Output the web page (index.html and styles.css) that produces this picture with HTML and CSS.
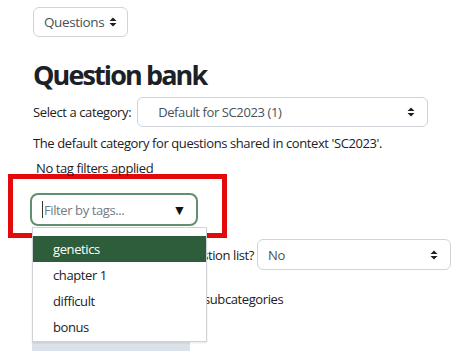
FILE: index.html
```html
<!DOCTYPE html>
<html lang="en">
<head>
<meta charset="utf-8">
<title>Question bank</title>
<link rel="stylesheet" href="styles.css">
</head>
<body>
<div class="page">
  <div class="select select-nav">
    <span>Questions</span>
    <svg class="updown" width="8" height="10" viewBox="0 0 8 10"><path d="M4 0.5 L7.5 4 H0.5 Z M4 9.5 L7.5 6 H0.5 Z" fill="#1d2125"/></svg>
  </div>

  <h2 class="title">Question bank</h2>

  <div class="row cat-row">
    <label class="label">Select a category:</label>
    <div class="select select-cat">
      <span>Default for SC2023 (1)</span>
      <svg class="updown" width="8" height="10" viewBox="0 0 8 10"><path d="M4 0.5 L7.5 4 H0.5 Z M4 9.5 L7.5 6 H0.5 Z" fill="#1d2125"/></svg>
    </div>
  </div>

  <p class="desc">The default category for questions shared in context 'SC2023'.</p>
  <p class="notags">No tag filters applied</p>

  <div class="highlight">
    <div class="tagfilter">
      <div class="tag-input">
        <span class="caret"></span>
        <span class="placeholder">Filter by tags...</span>
        <span class="down">&#9660;</span>
      </div>
      <ul class="suggestions">
        <li class="active">genetics</li>
        <li>chapter 1</li>
        <li>difficult</li>
        <li>bonus</li>
      </ul>
    </div>
  </div>

  <div class="row show-row">
    <label class="label">Show question text in the question list?</label>
    <div class="select select-no">
      <span>No</span>
      <svg class="updown" width="8" height="10" viewBox="0 0 8 10"><path d="M4 0.5 L7.5 4 H0.5 Z M4 9.5 L7.5 6 H0.5 Z" fill="#1d2125"/></svg>
    </div>
  </div>

  <div class="row check-row">
    <span class="checkbox"></span>
    <span>Also show questions from subcategories</span>
  </div>

  <div class="button-stub"></div>
</div>
</body>
</html>
```

FILE: styles.css
```css
html, body {
  margin: 0;
  padding: 0;
  background: #ffffff;
  overflow: hidden;
}

body {
  font-family: "Open Sans", "Noto Sans", "Liberation Sans", sans-serif;
  font-size: 13px;
  letter-spacing: -0.4px;
  color: #1d2125;
  width: 474px;
  height: 351px;
}

.page {
  padding: 7px 0 0 33px;
  position: relative;
}

.select {
  display: flex;
  flex-shrink: 0;
  align-items: center;
  justify-content: space-between;
  box-sizing: border-box;
  border: 1px solid #ced4da;
  border-radius: 6px;
  background: #fff;
  color: #495057;
}

.updown {
  display: block;
}

.select-nav {
  width: 95px;
  height: 30px;
  padding: 0 10px 0 10px;
  font-size: 13.5px;
}

.title {
  font-size: 27px;
  font-weight: 700;
  line-height: 34px;
  margin: 21px 0 0 0;
  letter-spacing: -1.9px;
}

.row {
  display: flex;
  align-items: center;
}

.cat-row {
  margin-top: 5px;
}

.label {
  margin-right: 6px;
  flex-shrink: 0;
}

.select-cat {
  width: 291px;
  height: 30px;
  padding: 0 12px 0 20px;
}

.desc {
  margin: 6px 0 0 0;
  line-height: 20px;
}

.notags {
  margin: 6px 0 0 3px;
  line-height: 18px;
}

.highlight {
  margin: -3px 0 0 -25px;
  width: 219px;
  height: 64px;
  box-sizing: border-box;
  border: 5px solid #e20a0a;
  padding: 14px 0 0 17px;
}

.tagfilter {
  position: relative;
}

.tag-input {
  width: 168px;
  height: 33px;
  box-sizing: border-box;
  border: 2.5px solid #5f9070;
  border-radius: 8px;
  display: flex;
  align-items: center;
  padding: 0 10px 0 10px;
  background: #fff;
}

.caret {
  width: 1px;
  height: 17px;
  background: #333;
  margin-right: 1px;
}

.placeholder {
  color: #737b82;
  flex: 1;
}

.down {
  font-size: 14px;
  color: #111;
}

.suggestions {
  list-style: none;
  margin: 0;
  padding: 8px 0 1px 0;
  position: absolute;
  left: 2px;
  top: 34px;
  width: 175px;
  box-sizing: border-box;
  background: #fff;
  border: 1px solid #cfd3d7;
  box-shadow: 0 1px 2px rgba(0, 0, 0, 0.1);
  z-index: 5;
}

.suggestions li {
  height: 26px;
  line-height: 26px;
  padding-left: 20px;
  color: #1d2125;
}

.suggestions li.active {
  background: #2e5d3b;
  color: #ffffff;
}

.show-row {
  margin-top: 1px;
}

.show-row .label {
  margin-right: 3px;
}

.select-no {
  width: 194px;
  height: 31px;
  padding: 0 12px 0 10px;
}

.check-row {
  margin-top: 20px;
  line-height: 18px;
}

.checkbox {
  width: 13px;
  height: 13px;
  border: 1px solid #767676;
  border-radius: 2px;
  margin-right: 6px;
}

.button-stub {
  margin-top: 24px;
  width: 158px;
  height: 32px;
  background: #dbe1e8;
  margin-left: -1px;
}
```
